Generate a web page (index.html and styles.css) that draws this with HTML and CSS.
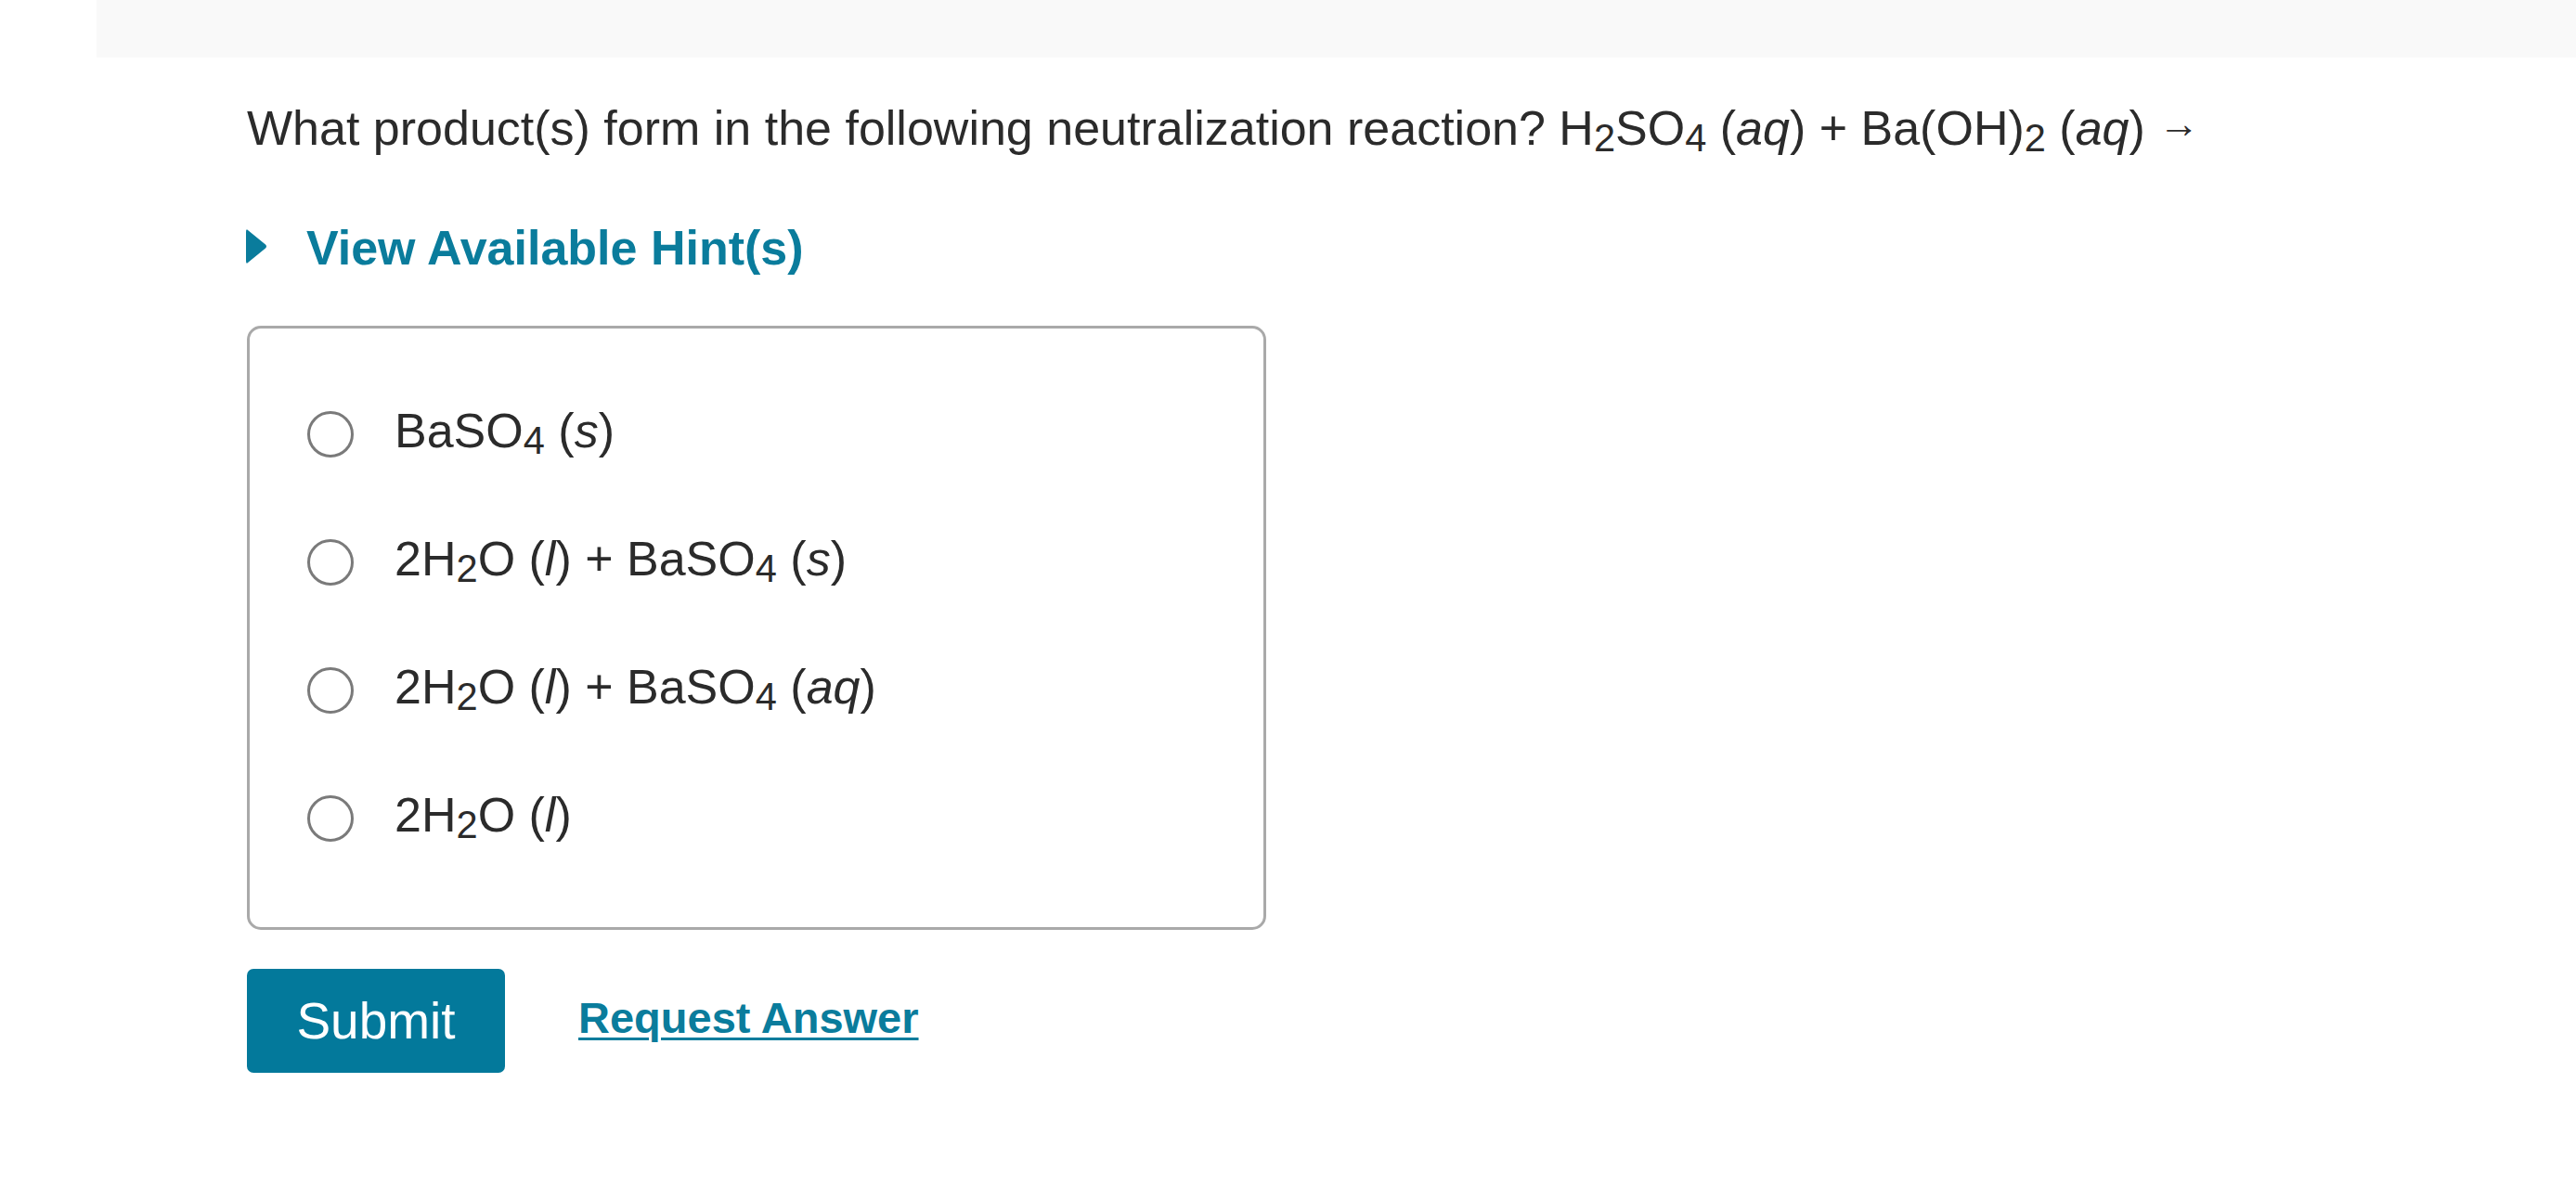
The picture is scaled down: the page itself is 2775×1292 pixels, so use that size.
FILE: index.html
```html
<!DOCTYPE html>
<html>
<head>
<meta charset="utf-8">
<link rel="stylesheet" href="styles.css">
</head>
<body>
<div class="page">
  <div class="topbar"></div>
  <div class="content">
    <p class="question">What product(s) form in the following neutralization reaction? H<sub>2</sub>SO<sub>4</sub> (<i>aq</i>) + Ba(OH)<sub>2</sub> (<i>aq</i>) <span class="arrow">→</span></p>
    <div class="hint">
      <svg class="hint-arrow" width="24" height="41" viewBox="0 0 24 41"><path d="M3 3 Q1 1 1 5 L1 36 Q1 40 3 38 L22 22.5 Q24 20.5 22 18.5 Z" fill="#0a7c9c"/></svg>
      <span class="hint-text">View Available Hint(s)</span>
    </div>
    <div class="choices">
      <label class="choice"><span class="radio"></span><span class="choice-text">BaSO<sub>4</sub> (<i>s</i>)</span></label>
      <label class="choice"><span class="radio"></span><span class="choice-text">2H<sub>2</sub>O (<i>l</i>) + BaSO<sub>4</sub> (<i>s</i>)</span></label>
      <label class="choice"><span class="radio"></span><span class="choice-text">2H<sub>2</sub>O (<i>l</i>) + BaSO<sub>4</sub> (<i>aq</i>)</span></label>
      <label class="choice"><span class="radio"></span><span class="choice-text">2H<sub>2</sub>O (<i>l</i>)</span></label>
    </div>
    <div class="actions">
      <button class="submit">Submit</button>
      <a class="request" href="#">Request Answer</a>
    </div>
  </div>
</div>
</body>
</html>
```
FILE: styles.css
```css
html, body {
  margin: 0;
  padding: 0;
  background: #ffffff;
}
body {
  font-family: "Liberation Sans", Arial, Helvetica, sans-serif;
  color: #2b2b2b;
}
.page {
  margin-left: 104px;
}
.topbar {
  height: 62px;
  background: #f9f9f9;
}
.content {
  padding-left: 162px;
}
.question {
  margin: 40px 0 0 0;
  font-size: 52px;
  line-height: 72px;
}
.arrow {
  font-size: 44px;
  font-weight: bold;
  line-height: 1;
  vertical-align: 8px;
}
sub {
  font-size: 0.8em;
  vertical-align: -0.18em;
  line-height: 0;
}
.hint {
  display: flex;
  align-items: center;
  margin-top: 57px;
  height: 72px;
}
.hint-arrow {
  display: block;
  margin-left: -2px;
  margin-bottom: 4px;
  margin-right: 42px;
}
.hint-text {
  font-size: 52px;
  line-height: 72px;
  font-weight: bold;
  color: #0a7c9c;
}
.choices {
  margin-top: 48px;
  border: 3px solid #a9a9a9;
  border-radius: 15px;
  display: flex;
  flex-direction: column;
  gap: 66px;
  padding-top: 74px;
  box-sizing: border-box;
  width: 1098px;
  height: 651px;
}
.choice {
  display: flex;
  align-items: center;
  height: 72px;
  padding-left: 62px;
}
.radio {
  display: block;
  width: 50px;
  height: 50px;
  box-sizing: border-box;
  border: 3px solid #7a7a7a;
  border-radius: 50%;
  margin-top: 8px;
  margin-right: 44px;
  background: #fff;
}
.choice-text {
  font-size: 52px;
  line-height: 72px;
}
.actions {
  display: flex;
  align-items: center;
  margin-top: 42px;
}
.submit {
  width: 278px;
  height: 112px;
  border: none;
  border-radius: 7px;
  background: #03799b;
  color: #ffffff;
  font-family: "Liberation Sans", Arial, Helvetica, sans-serif;
  font-size: 55px;
  padding: 0;
}
.request {
  margin-left: 79px;
  margin-bottom: 8px;
  font-size: 47px;
  font-weight: bold;
  color: #0a7c9c;
  text-decoration: underline;
  text-decoration-thickness: 3px;
  text-underline-offset: 5px;
}
```
